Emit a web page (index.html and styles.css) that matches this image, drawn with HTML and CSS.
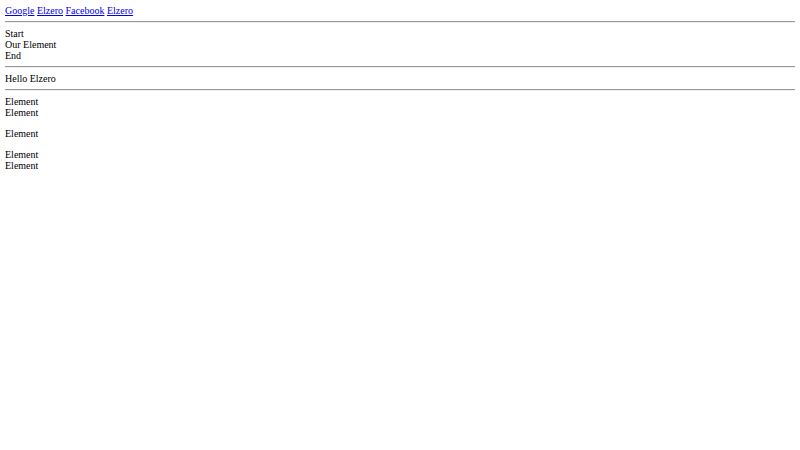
FILE: index.html
```html
<!DOCTYPE html>
<html lang="en">
<head>
  <meta charset="UTF-8">
  <title>DOM Insert Elements</title>
  <link rel="stylesheet" href="styles.css">
</head>
<body>

  <!-- Links -->
  <div class="links">
    <a href="#">Google</a>
    <a href="#">Elzero</a>
    <a href="#">Facebook</a>
    <a href="#">Elzero</a>
  </div>
  <hr>

  <div>Start</div>
  <div class="our">Our Element</div>
  <div>End</div>
  <hr>

  <div class="hello">Hello Elzero</div>
  <hr>

  <div>
    <div>Element</div>
    <div>Element</div>
  </div>
  <p>Element</p>
  <div>Element</div>
  <div>Element</div>

</body>
</html>
```

FILE: styles.css
```css
body {
  font-family: "Liberation Serif", "Times New Roman", serif;
  font-size: 10px;
  color: #000;
  background: white;
  margin: 5px;
}

a {
  color: #0000ee;
  text-decoration: underline;
}

hr {
  margin: 5px 0;
  border: none;
  border-top: 1px solid #9a9a9a;
  border-bottom: 0.5px solid #eeeeee;
}

p {
  margin: 10px 0;
}
```
